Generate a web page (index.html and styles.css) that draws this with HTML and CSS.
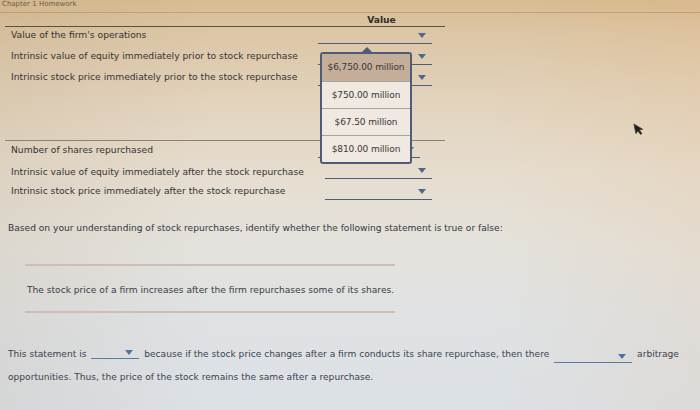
FILE: index.html
```html
<!DOCTYPE html>
<html>
<head>
<meta charset="utf-8">
<link rel="stylesheet" href="styles.css">
</head>
<body>
<div class="page">
  <div class="topbar"><span class="crumb">Chapter 1 Homework</span></div>

  <div class="table">
    <div class="head">
      <div class="hlabel"></div>
      <div class="hvalue">Value</div>
    </div>
    <div class="section first">
      <div class="row"><div class="label">Value of the firm's operations</div><div class="dd w114"><span class="arrow"></span></div></div>
      <div class="row"><div class="label">Intrinsic value of equity immediately prior to stock repurchase</div><div class="dd w114"><span class="arrow"></span></div></div>
      <div class="row"><div class="label">Intrinsic stock price immediately prior to the stock repurchase</div><div class="dd w114"><span class="arrow"></span></div></div>
    </div>
    <div class="section second">
      <div class="row"><div class="label">Number of shares repurchased</div><div class="dd w102"><span class="arrow"></span></div></div>
      <div class="row"><div class="label">Intrinsic value of equity immediately after the stock repurchase</div><div class="dd w107 shift"><span class="arrow"></span></div></div>
      <div class="row"><div class="label">Intrinsic stock price immediately after the stock repurchase</div><div class="dd w107 shift"><span class="arrow"></span></div></div>
    </div>
  </div>

  <p class="instr">Based on your understanding of stock repurchases, identify whether the following statement is true or false:</p>

  <div class="statement">The stock price of a firm increases after the firm repurchases some of its shares.</div>

  <p class="fill">This statement is <span class="dd inl w48"><span class="arrow"></span></span> because if the stock price changes after a firm conducts its share repurchase, then there <span class="dd inl w78 low"><span class="arrow"></span></span> arbitrage<br>opportunities. Thus, the price of the stock remains the same after a repurchase.</p>

  <div class="popup">
    <span class="caret"></span>
    <div class="opt sel">$6,750.00 million</div>
    <div class="opt">$750.00 million</div>
    <div class="opt">$67.50 million</div>
    <div class="opt">$810.00 million</div>
  </div>

  <svg class="cursor" width="10" height="14" viewBox="0 0 10 14"><path d="M1 1 L1 11 L3.5 8.6 L5.4 12.8 L7 12 L5.2 8 L8.6 8 Z" fill="#1f1f22" stroke="#3a3a3a" stroke-width="0.6"/></svg>
</div>
</body>
</html>
```

FILE: styles.css
```css
html, body {
  margin: 0;
  padding: 0;
}
body {
  width: 700px;
  height: 410px;
  overflow: hidden;
  font-family: "DejaVu Sans", "Verdana", sans-serif;
  font-size: 9.2px;
  color: #353432;
}
.page {
  position: relative;
  width: 700px;
  height: 410px;
  overflow: hidden;
  background:
    linear-gradient(90deg, rgba(150,120,80,0.10) 0%, rgba(0,0,0,0) 30%, rgba(0,0,0,0) 70%, rgba(230,160,90,0.10) 100%),
    linear-gradient(180deg, #d8bc92 0%, #dcc6a6 8%, #e2d3bd 25%, #e6ddcf 42%, #e4e2dc 60%, #dfe2e4 78%, #dce1e6 100%);
}
.topbar {
  height: 12px;
  border-bottom: 1px solid rgba(140,110,70,0.35);
  overflow: hidden;
}
.crumb {
  display: block;
  font-size: 7px;
  line-height: 8px;
  color: #6a5f50;
  padding-left: 2px;
}
.table {
  margin-left: 5px;
  width: 440px;
}
.head {
  display: flex;
  height: 13px;
  border-bottom: 1px solid #5e5040;
}
.hlabel {
  width: 313px;
}
.hvalue {
  width: 127px;
  text-align: center;
  font-weight: bold;
  line-height: 12px;
  padding-top: 1px;
  color: #2f2d2c;
}
.section.first {
  height: 113px;
}
.section.second {
  border-top: 1px solid #8c8272;
}
.row {
  display: flex;
  height: 21px;
  align-items: flex-start;
}
.label {
  width: 307px;
  padding-left: 6px;
  line-height: 16px;
  white-space: nowrap;
}
.second .row:nth-child(1) .label { padding-top: 1px; }
.second .row:nth-child(2) .label { padding-top: 2px; }
.dd {
  position: relative;
  display: block;
  height: 16px;
  border-bottom: 1px solid #4e5d78;
}
.w114 { width: 114px; }
.w102 { width: 102px; }
.w107 { width: 107px; }
.shift { margin-left: 7px; }
.arrow {
  position: absolute;
  right: 6px;
  top: 6px;
  width: 0;
  height: 0;
  border-left: 4px solid transparent;
  border-right: 4px solid transparent;
  border-top: 5px solid #4d6890;
}
.instr {
  margin: 16px 0 0 8px;
  line-height: 16px;
  font-size: 9.1px;
  white-space: nowrap;
  color: #33373f;
}
.statement {
  margin: 28px 0 0 25px;
  width: 368px;
  border-top: 2px solid #cdbdb5;
  border-bottom: 2px solid #cdbdb5;
  padding: 16px 0 13px 2px;
  line-height: 16px;
  white-space: nowrap;
  font-size: 9.1px;
  color: #373c47;
}
.fill {
  margin: 30px 0 0 8px;
  line-height: 23px;
  font-size: 9.1px;
  white-space: nowrap;
  color: #3a4250;
}
.dd.inl {
  display: inline-block;
  vertical-align: -2px;
  height: 10px;
  border-bottom-color: #5a78a8;
  margin: 0 2px;
}
.dd.inl .arrow {
  top: 2px;
  border-top-color: #4f72a8;
}
.dd.inl.low {
  vertical-align: -6px;
}
.w48 { width: 48px; }
.w78 { width: 78px; }
.popup {
  position: absolute;
  left: 320px;
  top: 52px;
  width: 88px;
  border: 2px solid #4f5b78;
  border-radius: 3px;
  background: #efe9e1;
}
.caret {
  position: absolute;
  left: 40px;
  top: -7px;
  width: 0;
  height: 0;
  border-left: 5px solid transparent;
  border-right: 5px solid transparent;
  border-bottom: 5px solid #4f5b78;
}
.opt {
  height: 26px;
  line-height: 26px;
  text-align: center;
  border-top: 1px solid #a7a29a;
  white-space: nowrap;
  font-size: 9px;
  letter-spacing: -0.1px;
  color: #3a3634;
}
.opt:first-of-type {
  border-top: none;
}
.opt.sel {
  background: #c5ae99;
  height: 27px;
}
.cursor {
  position: absolute;
  left: 634px;
  top: 122px;
  transform: rotate(-12deg);
}
```
